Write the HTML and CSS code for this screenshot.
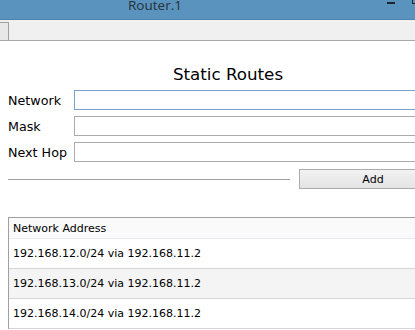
FILE: index.html
```html
<!DOCTYPE html>
<html lang="en">
<head>
    <meta charset="UTF-8">
    <title>Router.1</title>
    <link rel="stylesheet" href="styles.css">
</head>
<body>
    <div class="titlebar">
        <span class="title">Router.1</span>
        <span class="btn-min"></span>
        <span class="btn-max"></span>
    </div>
    <div class="toolbar">
        <div class="tab"></div>
    </div>

    <div class="page">
        <h1>Static Routes</h1>
        <div class="form">
            <label>Network</label>
            <input type="text" class="focused">
            <label>Mask</label>
            <input type="text">
            <label>Next Hop</label>
            <input type="text">
        </div>
        <div class="actions">
            <div class="rule"></div>
            <button class="btn">Add</button>
        </div>

        <div class="list">
            <div class="list-head">Network Address</div>
            <div class="list-row">192.168.12.0/24 via 192.168.11.2</div>
            <div class="list-row alt">192.168.13.0/24 via 192.168.11.2</div>
            <div class="list-row">192.168.14.0/24 via 192.168.11.2</div>
        </div>
    </div>
</body>
</html>
```

FILE: styles.css
```css
html, body {
    margin: 0;
    overflow: hidden;
    background: #fff;
    font-family: "DejaVu Sans", Verdana, sans-serif;
    color: #000;
}
.titlebar {
    display: flex;
    height: 19px;
    width: 440px;
    background: #5a93bd;
    border-bottom: 1px solid #4d82aa;
}
.title {
    width: 310px;
    text-align: center;
    font-family: "Open Sans", sans-serif;
    font-size: 13.5px;
    line-height: 10px;
    color: #27313b;
}
.btn-min {
    width: 8px;
    height: 2px;
    margin: 2px 0 0 77px;
    background: #1c2630;
}
.btn-max {
    width: 9px;
    height: 3px;
    margin-left: 17px;
    border-left: 1px solid #1c2630;
    border-bottom: 1px solid #1c2630;
}
.toolbar {
    height: 20px;
    width: 440px;
    background: #f0f0f0;
    border-bottom: 1px solid #a9a9a9;
    display: flex;
    align-items: flex-end;
}
.tab {
    width: 8px;
    height: 17px;
    background: #e8e8e8;
    border-top: 1px solid #a0a0a0;
    border-right: 1px solid #a0a0a0;
}
.page {
    width: 440px;
    padding: 0 8px;
}
h1 {
    margin: 23px 0 0;
    font-size: 16.7px;
    font-weight: normal;
    line-height: 20px;
    text-align: center;
}
.form {
    display: grid;
    grid-template-columns: 66px 1fr;
    row-gap: 6px;
    margin-top: 6px;
    align-items: center;
}
.form label {
    font-size: 12.7px;
}
.form input {
    box-sizing: border-box;
    height: 20px;
    margin: 0;
    border: 1px solid #ababab;
    background: #fff;
    outline: none;
}
.form input.focused {
    border-color: #7da2ce;
}
.actions {
    display: flex;
    align-items: center;
    gap: 9px;
    margin-top: 7px;
}
.rule {
    width: 282px;
    height: 1px;
    background: #a0a0a0;
}
.btn {
    box-sizing: border-box;
    width: 148px;
    height: 20px;
    padding: 0;
    font-family: "DejaVu Sans", Verdana, sans-serif;
    font-size: 11px;
    color: #000;
    background: linear-gradient(#f2f2f2, #e4e4e4);
    border: 1px solid #acacac;
}
.list {
    margin-top: 28px;
    border-top: 1px solid #a0a0a0;
    border-left: 1px solid #a0a0a0;
    font-size: 11px;
}
.list-head {
    height: 19px;
    padding: 1px 0 0 4px;
    line-height: 20px;
    background: #fafafa;
    border-bottom: 1px solid #e3ecf8;
}
.list-row {
    height: 29px;
    line-height: 30px;
    padding-left: 4px;
    border-bottom: 1px solid #d6d6d6;
}
.list-row.alt {
    background: #f4f4f4;
}
```
